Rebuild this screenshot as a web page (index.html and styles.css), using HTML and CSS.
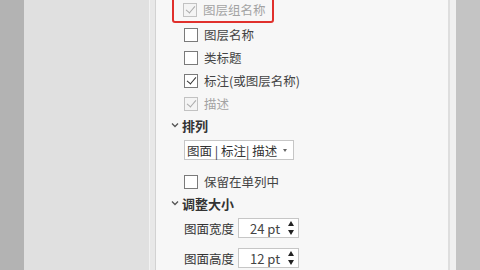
FILE: index.html
```html
<!doctype html>
<html>
  <head>
    <title>符号属性</title>
    <link rel="stylesheet" href="styles.css">
  </head>
  <body>
    <div class="page">
      <div class="rail"></div>
      <div class="side"></div>
      <div class="split"></div>

      <div class="panel">
        <div class="highlight">
          <label class="check-row disabled">
            <span class="box checked"></span>
            <span>图层组名称</span>
          </label>
        </div>

        <label class="check-row">
          <span class="box"></span>
          <span>图层名称</span>
        </label>
        <label class="check-row">
          <span class="box"></span>
          <span>类标题</span>
        </label>
        <label class="check-row">
          <span class="box checked"></span>
          <span>标注(或图层名称)</span>
        </label>
        <label class="check-row disabled">
          <span class="box checked"></span>
          <span>描述</span>
        </label>

        <div class="section-title">
          <svg class="chevron" width="8" height="6" viewBox="0 0 8 6">
            <polyline points="1,1.5 4,4.5 7,1.5" />
          </svg>
          排列
        </div>
        <div class="dropdown">
          <span>图面 | 标注| 描述</span>
          <span class="caret"></span>
        </div>

        <label class="check-row keep">
          <span class="box"></span>
          <span>保留在单列中</span>
        </label>

        <div class="section-title">
          <svg class="chevron" width="8" height="6" viewBox="0 0 8 6">
            <polyline points="1,1.5 4,4.5 7,1.5" />
          </svg>
          调整大小
        </div>
        <div class="field-row">
          <span class="field-label">图面宽度</span>
          <div class="spin">
            <span>24 pt</span>
            <span class="spin-arrows"><i class="up"></i><i class="down"></i></span>
          </div>
        </div>
        <div class="field-row">
          <span class="field-label">图面高度</span>
          <div class="spin">
            <span>12 pt</span>
            <span class="spin-arrows"><i class="up"></i><i class="down"></i></span>
          </div>
        </div>
      </div>

      <div class="edge"></div>
      <div class="gutter"></div>
      <div class="scroll"></div>
    </div>
  </body>
</html>
```

FILE: styles.css
```css
body {
  margin: 0;
  font-family: "Noto Sans CJK SC", "Liberation Sans", sans-serif;
  font-size: 12.5px;
  color: #444;
}
.page {
  display: flex;
  width: 480px;
  height: 270px;
  overflow: hidden;
}
.rail {
  width: 24px;
  background-color: #b3b3b3;
}
.side {
  width: 125px;
  background-color: #e0e0e0;
}
.split {
  box-sizing: border-box;
  width: 7px;
  background-color: #e8e8e8;
  border-left: 1px solid #f2f2f2;
  border-right: 1px solid #d2d2d2;
}
.panel {
  flex: 1;
  background-color: #f7f7f7;
  padding-left: 15px;
}
.edge {
  width: 2px;
  background-color: #dedede;
}
.gutter {
  width: 6px;
  background-color: #f0f0f0;
}
.scroll {
  width: 24px;
  background-color: #c4c4c4;
}
.highlight {
  width: 98px;
  margin-top: -5px;
  margin-left: 1px;
  padding-top: 1px;
  border: 2px solid #e0302c;
  border-radius: 3px;
}
.highlight .check-row {
  padding-left: 9px;
}
.check-row {
  display: flex;
  align-items: center;
  gap: 6px;
  height: 23px;
  padding-left: 13px;
  white-space: nowrap;
}
.check-row.disabled {
  color: #a3a3a3;
}
.box {
  position: relative;
  box-sizing: border-box;
  width: 14px;
  height: 14px;
  border: 1px solid #7a7a7a;
  background-color: #fff;
}
.box.checked:after {
  content: "";
  position: absolute;
  left: 4px;
  top: 0;
  width: 4px;
  height: 8px;
  border-right: 1px solid #333;
  border-bottom: 1px solid #333;
  transform: rotate(40deg);
}
.disabled .box {
  border-color: #c2c2c2;
  background-color: #f4f4f4;
}
.disabled .box.checked:after {
  border-color: #aaa;
}
.section-title {
  display: flex;
  align-items: center;
  gap: 3px;
  height: 20px;
  font-size: 13px;
  font-weight: bold;
  color: #333;
}
.chevron {
  fill: none;
  stroke: #555;
  stroke-width: 1.3;
}
.dropdown {
  box-sizing: border-box;
  display: flex;
  align-items: center;
  justify-content: space-between;
  width: 110px;
  height: 20px;
  margin: 5px 0 0 13px;
  padding: 0 6px 0 2px;
  border: 1px solid #c6c6c6;
  background-color: #fff;
  color: #333;
  white-space: nowrap;
}
.caret {
  width: 0;
  height: 0;
  border-left: 2px solid transparent;
  border-right: 2px solid transparent;
  border-top: 3px solid #666;
}
.keep {
  margin-top: 10px;
}
.field-row {
  display: flex;
  align-items: center;
  padding-left: 13px;
  margin-top: 5px;
}
.field-row + .field-row {
  margin-top: 10px;
}
.field-label {
  width: 54px;
  color: #333;
}
.spin {
  box-sizing: border-box;
  display: flex;
  align-items: center;
  justify-content: space-between;
  width: 61px;
  height: 20px;
  padding: 0 4px 0 11px;
  border: 1px solid #c6c6c6;
  background-color: #fff;
  color: #444;
  font-size: 13px;
}
.spin-arrows {
  display: flex;
  flex-direction: column;
  gap: 4px;
}
.spin-arrows i {
  width: 0;
  height: 0;
  border-left: 3.5px solid transparent;
  border-right: 3.5px solid transparent;
}
.spin-arrows .up {
  border-bottom: 5px solid #222;
}
.spin-arrows .down {
  border-top: 5px solid #222;
}
```
